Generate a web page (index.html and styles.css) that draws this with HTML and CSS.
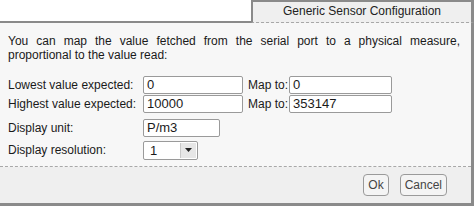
FILE: index.html
```html
<!DOCTYPE html>
<html>
<head>
<meta charset="utf-8">
<link rel="stylesheet" href="styles.css">
</head>
<body>
<div class="dialog">
  <div class="tabs">
    <div class="tab-spacer"></div>
    <div class="tab">Generic Sensor Configuration</div>
  </div>
  <div class="panel">
    <div class="content">
      <p class="intro">You can map the value fetched from the serial port to a physical measure, proportional to the value read:</p>
      <div class="row row-first">
        <span class="label">Lowest value expected:</span>
        <span class="input wide">0</span>
        <span class="map">Map to:</span>
        <span class="input map-input">0</span>
      </div>
      <div class="row">
        <span class="label">Highest value expected:</span>
        <span class="input wide">10000</span>
        <span class="map">Map to:</span>
        <span class="input map-input">353147</span>
      </div>
      <div class="row row-unit">
        <span class="label">Display unit:</span>
        <span class="input unit">P/m3</span>
      </div>
      <div class="row row-res">
        <span class="label">Display resolution:</span>
        <span class="select"><span class="select-val">1</span><span class="select-btn"><svg width="7" height="4" viewBox="0 0 7 4"><path d="M0 0H7L3.5 4Z" fill="#222"/></svg></span></span>
      </div>
    </div>
    <div class="footer">
      <span class="btn">Ok</span>
      <span class="btn">Cancel</span>
    </div>
  </div>
</div>
</body>
</html>
```
FILE: styles.css
```css
html, body {
  margin: 0;
  padding: 0;
  background: #ffffff;
}
body {
  font-family: "Liberation Sans", Arial, sans-serif;
  font-size: 12px;
  color: #1a1a1a;
}
.dialog {
  width: 474px;
  height: 207px;
}
.tabs {
  display: flex;
  height: 23px;
}
.tab-spacer {
  flex: 1;
  border-bottom: 2px solid #8a8a8a;
}
.tab {
  width: 218px;
  border-left: 2px solid #8a8a8a;
  border-top: 2px solid #8a8a8a;
  border-right: 3px solid #8a8a8a;
  border-bottom: 1px dashed #a8a8a8;
  background: #efefef;
  text-align: center;
  line-height: 19px;
  font-size: 12px;
  color: #222;
}
.panel {
  border-right: 3px solid #8a8a8a;
  border-bottom: 3px solid #8a8a8a;
  background: #f7f7f7;
}
.content {
  padding: 11px 11px 6px 8px;
  height: 126px;
  border-bottom: 1px dashed #a8a8a8;
}
.intro {
  margin: 0;
  line-height: 14px;
  text-align: justify;
}
.row {
  display: flex;
  align-items: center;
  height: 18px;
  margin-top: 1px;
}
.row-first {
  margin-top: 14px;
}
.row-unit {
  margin-top: 6px;
}
.row-res {
  margin-top: 4px;
}
.label {
  width: 135px;
  flex: none;
}
.input {
  box-sizing: border-box;
  height: 18px;
  border: 1px solid #9a9a9a;
  border-radius: 2px;
  background: #ffffff;
  padding: 0 3px;
  line-height: 16px;
  font-size: 13px;
}
.wide {
  width: 100px;
}
.map {
  margin-left: 5px;
  width: 41px;
}
.map-input {
  width: 103px;
}
.unit {
  width: 77px;
}
.select {
  box-sizing: border-box;
  display: flex;
  width: 55px;
  height: 19px;
  border: 1px solid #9a9a9a;
  border-radius: 2px;
  background: #fff;
}
.select-val {
  flex: 1;
  padding-left: 6px;
  line-height: 17px;
  font-size: 13px;
}
.select-btn {
  width: 15px;
  margin: 1px;
  border-left: 1px solid #c8c8c8;
  background: #e6e6e6;
  display: flex;
  align-items: center;
  justify-content: center;
}
.footer {
  display: flex;
  justify-content: flex-end;
  align-items: center;
  gap: 11px;
  height: 36px;
  padding-right: 24px;
  background: #efefef;
}
.btn {
  box-sizing: border-box;
  height: 22px;
  line-height: 20px;
  padding: 0 4px;
  border: 1px solid #9a9a9a;
  border-radius: 4px;
  background: #f4f4f4;
  color: #444;
  font-size: 12px;
}
```
